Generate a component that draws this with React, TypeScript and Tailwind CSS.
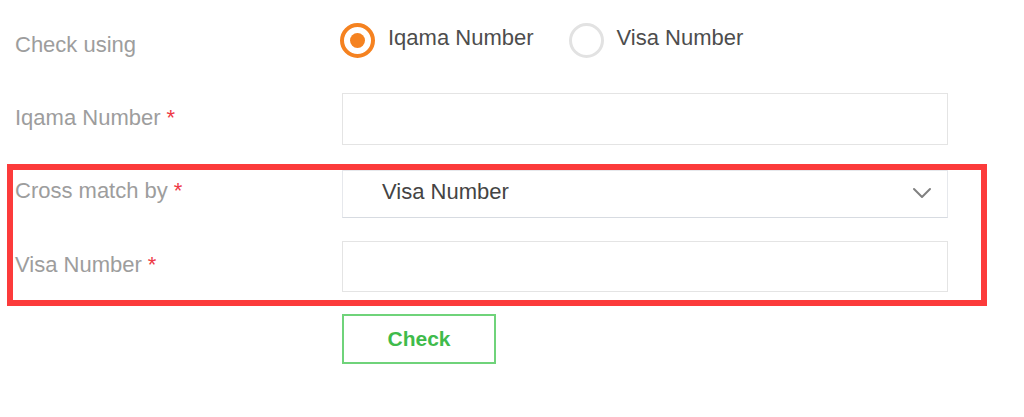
import { useState } from "react"

// Check form – iqama / visa cross match
export default function App() {
  const [using, setUsing] = useState("iqama")

  const Radio = ({ value, label }: { value: string; label: string }) => {
    const on = using === value
    return (
      <button type="button" onClick={() => setUsing(value)} className="flex items-center gap-[13px]">
        <span
          className={
            on
              ? "flex h-[35px] w-[35px] items-center justify-center rounded-full border-[4px] border-[#f58220]"
              : "flex h-[35px] w-[35px] items-center justify-center rounded-full border-[3px] border-[#e2e2e2]"
          }
        >
          {on && <span className="h-[15px] w-[15px] rounded-full bg-[#f58220]" />}
        </span>
        <span className="mb-[4px] text-[22px] leading-[22px] text-[#4d4d4d]">{label}</span>
      </button>
    )
  }

  const Star = () => <span className="ml-[6px] text-[#ee3a46]">*</span>

  return (
    <div className="h-[417px] w-[1024px] overflow-hidden bg-white pt-[22px] font-['Liberation_Sans',Arial,sans-serif]">
      {/* check using */}
      <div className="flex items-start">
        <div className="w-[340px] pl-[15px] pt-[12px] text-[22px] leading-[22px] text-[#9d9d9d]">Check using</div>
        <div className="flex h-[36px] items-center gap-[35px]">
          <Radio value="iqama" label="Iqama Number" />
          <Radio value="visa" label="Visa Number" />
        </div>
      </div>

      {/* iqama number */}
      <div className="mt-[35px] flex items-start">
        <div className="w-[342px] pl-[15px] pt-[14px] text-[22px] leading-[22px] text-[#9d9d9d]">
          Iqama Number<Star />
        </div>
        <input className="h-[52px] w-[606px] border border-[#e4e4e4] px-4 text-[20px] outline-none" />
      </div>

      {/* highlighted */}
      <div className="ml-[7px] mt-[19px] w-[980px] border-[6px] border-[#fc3b3b] pb-[8px]">
        <div className="flex items-start">
          <div className="w-[329px] pl-[2px] pt-[10px] text-[22px] leading-[22px] text-[#9d9d9d]">
            Cross match by<Star />
          </div>
          <div className="flex h-[48px] w-[606px] items-center justify-between border border-[#e6e8ec] border-b-[#d7dbe1] pl-[39px] pr-[15px]">
            <span className="mb-[5px] text-[22px] leading-[22px] text-[#444]">Visa Number</span>
            <svg width="20" height="12" viewBox="0 0 20 12" fill="none" className="mb-[2px]">
              <path d="M2 2l8 8 8-8" stroke="#808080" strokeWidth="2" strokeLinecap="round" strokeLinejoin="round" />
            </svg>
          </div>
        </div>
        <div className="mt-[23px] flex items-start">
          <div className="w-[329px] pl-[2px] pt-[13px] text-[22px] leading-[22px] text-[#9d9d9d]">
            Visa Number<Star />
          </div>
          <input className="h-[51px] w-[606px] border border-[#e4e4e4] px-4 text-[20px] outline-none" />
        </div>
      </div>

      <div className="mt-[8px] pl-[342px]">
        <button
          type="button"
          className="flex h-[50px] w-[154px] items-center justify-center border-2 border-[#6fd37a] text-[21px] font-bold text-[#3fbb4b]"
        >
          Check
        </button>
      </div>
    </div>
  )
}
